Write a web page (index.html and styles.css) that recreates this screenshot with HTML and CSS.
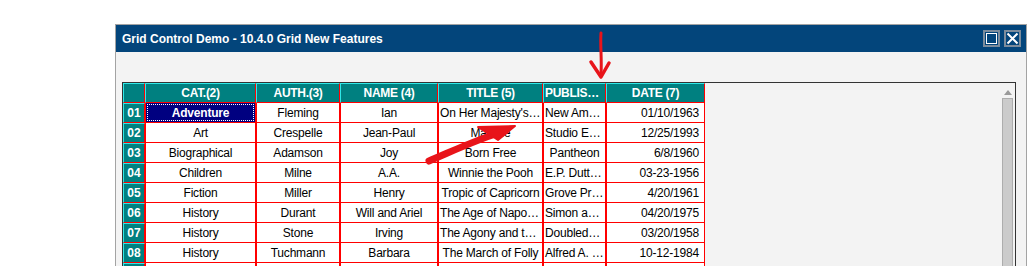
FILE: index.html
```html
<!DOCTYPE html>
<html>
	<head>
		<meta charset="UTF-8">
		<title>Grid Control Demo</title>
		<link rel="stylesheet" href="styles.css">
	</head>
	<body>
		<div id="window">
			<div class="titlebar">
				<span class="title">Grid Control Demo - 10.4.0 Grid New Features</span>
				<span class="winbtn"><span class="maxbox"></span></span>
				<span class="winbtn">
					<svg width="13" height="13" viewBox="0 0 13 13"><path d="M1.5 1.5 L11.5 11.5 M11.5 1.5 L1.5 11.5" stroke="#fff" stroke-width="2" fill="none"/></svg>
				</span>
			</div>
			<div class="winbody">
				<div class="gridbox">
					<div class="grid">
						<div class="hcell corner"></div>
						<div class="hcell">CAT.(2)</div>
						<div class="hcell">AUTH.(3)</div>
						<div class="hcell">NAME (4)</div>
						<div class="hcell">TITLE (5)</div>
						<div class="hcell">PUBLISHER (6)</div>
						<div class="hcell">DATE (7)</div>

						<div class="rowhead">01</div>
						<div class="cell selected"><span class="focus">Adventure</span></div>
						<div class="cell">Fleming</div>
						<div class="cell">Ian</div>
						<div class="cell">On Her Majesty's Secret Service</div>
						<div class="cell">New American Library</div>
						<div class="cell right">01/10/1963</div>

						<div class="rowhead">02</div>
						<div class="cell">Art</div>
						<div class="cell">Crespelle</div>
						<div class="cell">Jean-Paul</div>
						<div class="cell">Matisse</div>
						<div class="cell">Studio Editions</div>
						<div class="cell right">12/25/1993</div>

						<div class="rowhead">03</div>
						<div class="cell">Biographical</div>
						<div class="cell">Adamson</div>
						<div class="cell">Joy</div>
						<div class="cell">Born Free</div>
						<div class="cell">Pantheon</div>
						<div class="cell right">6/8/1960</div>

						<div class="rowhead">04</div>
						<div class="cell">Children</div>
						<div class="cell">Milne</div>
						<div class="cell">A.A.</div>
						<div class="cell">Winnie the Pooh</div>
						<div class="cell">E.P. Dutton &amp; Co.</div>
						<div class="cell right">03-23-1956</div>

						<div class="rowhead">05</div>
						<div class="cell">Fiction</div>
						<div class="cell">Miller</div>
						<div class="cell">Henry</div>
						<div class="cell">Tropic of Capricorn</div>
						<div class="cell">Grove Press</div>
						<div class="cell right">4/20/1961</div>

						<div class="rowhead">06</div>
						<div class="cell">History</div>
						<div class="cell">Durant</div>
						<div class="cell">Will and Ariel</div>
						<div class="cell">The Age of Napoleon</div>
						<div class="cell">Simon and Schuster</div>
						<div class="cell right">04/20/1975</div>

						<div class="rowhead">07</div>
						<div class="cell">History</div>
						<div class="cell">Stone</div>
						<div class="cell">Irving</div>
						<div class="cell">The Agony and the Ecstasy</div>
						<div class="cell">Doubleday &amp; Co.</div>
						<div class="cell right">03/20/1958</div>

						<div class="rowhead">08</div>
						<div class="cell">History</div>
						<div class="cell">Tuchmann</div>
						<div class="cell">Barbara</div>
						<div class="cell">The March of Folly</div>
						<div class="cell">Alfred A. Knopf</div>
						<div class="cell right">10-12-1984</div>

						<div class="rowhead">09</div>
						<div class="cell">Humor</div>
						<div class="cell">Thurber</div>
						<div class="cell">James</div>
						<div class="cell">My Life and Hard Times</div>
						<div class="cell">Harper</div>
						<div class="cell right">1933</div>
					</div>
					<div class="vscroll">
						<div class="uparrow"></div>
						<div class="thumb"></div>
					</div>
				</div>
			</div>
		</div>

		<!-- hand drawn annotations over the screenshot -->
		<svg class="marks" width="1032" height="266" viewBox="0 0 1032 266">
			<path d="M601 33 C600 45 602 58 601 74" stroke="#e8141a" stroke-width="3" fill="none" stroke-linecap="round"/>
			<path d="M591 62 L601 77 L609 63" stroke="#e8141a" stroke-width="3.5" fill="none" stroke-linecap="round" stroke-linejoin="round"/>
			<path d="M429 161 C455 150 480 138 505 131" stroke="#e8141a" stroke-width="7" fill="none" stroke-linecap="round"/>
			<path d="M478 127 L515 126 L498 140 Z" fill="#e8141a" stroke="#e8141a" stroke-width="2" stroke-linejoin="round"/>
		</svg>
	</body>
</html>
```

FILE: styles.css
```css
body {
	margin: 0;
	background-color: #ffffff;
	font-family: "Liberation Sans", Arial, sans-serif;
	font-size: 12px;
	overflow: hidden;
}
#window {
	margin-left: 115px;
	margin-top: 24px;
	width: 910px;
	height: 260px;
	border: 1px solid #a3a3a3;
	background-color: #f3f3f3;
}
.titlebar {
	height: 27px;
	background-color: #03457b;
	display: flex;
	align-items: center;
	padding-left: 6px;
	padding-right: 5px;
}
.title {
	flex: 1;
	color: #ffffff;
	font-weight: bold;
	font-size: 12px;
	padding-top: 1px;
}
.winbtn {
	width: 13px;
	height: 13px;
	border: 2px solid #7c8c9c;
	margin-left: 4px;
	display: flex;
	align-items: center;
	justify-content: center;
}
.maxbox {
	width: 9px;
	height: 9px;
	border: 1.5px solid #ffffff;
}
.winbody {
	padding: 30px 10px 0 6px;
}
.gridbox {
	border: 1px solid #333333;
	height: 240px;
	display: flex;
	justify-content: space-between;
}
.grid {
	display: grid;
	grid-template-columns: 22px 111px 84px 98px 105px 63px 99px;
	grid-auto-rows: 20px;
	align-self: flex-start;
}
.hcell, .rowhead {
	box-sizing: border-box;
	background-color: #008080;
	color: #ffffff;
	font-weight: bold;
	letter-spacing: -0.3px;
	border-top: 1px solid #2ee8e8;
	border-left: 1px solid #2ee8e8;
	border-right: 1px solid #ff0000;
	border-bottom: 1px solid #ff0000;
	text-align: center;
	line-height: 18px;
	white-space: nowrap;
	overflow: hidden;
	text-overflow: ellipsis;
	padding: 0 1px;
}
.rowhead {
	padding: 0;
	line-height: 19px;
	letter-spacing: 0;
}
.cell {
	box-sizing: border-box;
	background-color: #ffffff;
	color: #000000;
	font-size: 12px;
	letter-spacing: -0.2px;
	border-left: 1px solid #ff0000;
	border-right: 1px solid #ff0000;
	border-bottom: 1px solid #ff0000;
	text-align: center;
	line-height: 20px;
	white-space: nowrap;
	overflow: hidden;
	text-overflow: ellipsis;
	padding: 0 1px;
}
.right {
	text-align: right;
	padding-right: 5px;
}
.selected {
	background-color: #000080;
	padding: 1px;
}
.focus {
	display: block;
	height: 17px;
	line-height: 16px;
	box-sizing: border-box;
	border: 1px dotted #ffffff;
	color: #ffffff;
	font-weight: bold;
}
.vscroll {
	width: 13px;
	margin-right: 1px;
	padding-top: 7px;
	display: flex;
	flex-direction: column;
	align-items: center;
}
.uparrow {
	width: 0;
	height: 0;
	border-left: 4px solid transparent;
	border-right: 4px solid transparent;
	border-bottom: 5px solid #9a9a9a;
}
.thumb {
	margin-top: 3px;
	width: 9px;
	height: 200px;
	background-color: #cbcbcb;
	border: 1px solid #adadad;
}
.marks {
	position: absolute;
	left: 0;
	top: 0;
	pointer-events: none;
}
```
